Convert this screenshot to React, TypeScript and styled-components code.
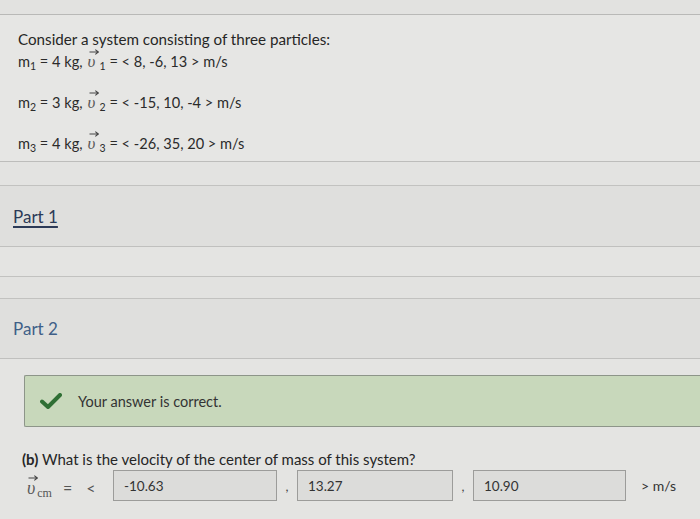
import React from 'react';
import styled, { createGlobalStyle } from 'styled-components';

const GlobalStyle = createGlobalStyle`
  html, body {
    margin: 0;
    padding: 0;
    background: #e2e2e0;
  }
  body {
    font-family: Lato, "Open Sans", sans-serif;
    color: #2a2a2a;
  }
`;

const Page = styled.div`
  width: 700px;
  height: 519px;
  overflow: hidden;
  display: flex;
  flex-direction: column;
  padding-top: 14px;
  box-sizing: border-box;
`;

const QuestionCard = styled.div`
  border-top: 1px solid #b9b9b7;
  border-bottom: 1px solid #bdbdbb;
  background: #e6e6e4;
  padding: 15px 18px 0 18px;
  height: 148px;
  box-sizing: border-box;
`;

const Intro = styled.div`
  font-size: 15.2px;
  line-height: 19px;
  color: #262626;
`;

const ParticleLine = styled.div<{ $gap?: number }>`
  font-size: 14.6px;
  line-height: 20px;
  margin-top: ${(p) => p.$gap ?? 0}px;
  color: #2b2b2b;
  white-space: nowrap;
`;

const Sub = styled.sub`
  font-size: 10.5px;
  vertical-align: -3px;
  line-height: 0;
`;

const VecWrap = styled.span<{ $size: number }>`
  display: inline-block;
  line-height: 1;
  font-family: "Liberation Serif", "DejaVu Serif", serif;
  font-style: italic;
  font-size: ${(p) => p.$size}px;
  color: #5a5a5a;
  margin: 0 1px 0 5px;
  white-space: nowrap;
`;

const Arrow = styled.svg`
  display: block;
  margin-left: 1px;
  margin-bottom: -2px;
`;

const Strip = styled.div<{ $h: number; $bg: string }>`
  height: ${(p) => p.$h}px;
  background: ${(p) => p.$bg};
  border-bottom: 1px solid #c2c2c0;
  box-sizing: border-box;
`;

const PartBand = styled.div<{ $h: number }>`
  height: ${(p) => p.$h}px;
  background: #dfdfdd;
  border-bottom: 1px solid #c0c0be;
  box-sizing: border-box;
  display: flex;
  align-items: center;
  padding-left: 13px;
`;

const PartLink = styled.span<{ $underline?: boolean; $color: string }>`
  font-size: 17px;
  color: ${(p) => p.$color};
  text-decoration: ${(p) => (p.$underline ? 'underline' : 'none')};
  text-underline-offset: 3px;
  text-decoration-thickness: 1.5px;
`;

const AnswerArea = styled.div`
  flex: 1;
  background: #e4e4e2;
  padding: 16px 0 0 24px;
  display: flex;
  flex-direction: column;
`;

const CorrectBox = styled.div`
  height: 52px;
  background: #c8d8bb;
  border: 1px solid #8d9589;
  border-right: none;
  border-radius: 2px 0 0 2px;
  display: flex;
  align-items: center;
  padding-left: 15px;
  gap: 16px;
  box-sizing: border-box;
`;

const CorrectText = styled.span`
  font-size: 14.5px;
  color: #333;
`;

const QuestionText = styled.div`
  margin-top: 23px;
  margin-left: -2px;
  font-size: 15px;
  color: #262626;
  b {
    font-weight: 700;
  }
`;

const AnswerRow = styled.div`
  display: flex;
  align-items: center;
  margin-top: 2px;
  margin-left: -2px;
`;

const Label = styled.div`
  display: flex;
  align-items: baseline;
  width: 91px;
  font-size: 15px;
  color: #555;
`;

const CmSub = styled.span`
  font-family: "Liberation Serif", serif;
  font-size: 12px;
  font-style: normal;
  margin-left: 2px;
  position: relative;
  top: 3px;
  color: #555;
`;

const Op = styled.span<{ $ml: number }>`
  margin-left: ${(p) => p.$ml}px;
  font-size: 16px;
  color: #555;
`;

const Field = styled.div<{ $w: number }>`
  width: ${(p) => p.$w}px;
  height: 31px;
  box-sizing: border-box;
  background: #dcdcda;
  border: 1px solid #9c9c9a;
  display: flex;
  align-items: center;
  padding-left: 10px;
  font-size: 13.5px;
  color: #333;
`;

const Comma = styled.span`
  width: 20px;
  text-align: center;
  font-size: 13px;
  color: #444;
`;

const Unit = styled.span`
  margin-left: 15px;
  font-size: 14px;
  color: #333;
`;

const Vec: React.FC<{ sub?: string; size?: number }> = ({ sub, size = 17 }) => (
  <VecWrap $size={size}>
    <Arrow width="10" height="6" viewBox="0 0 10 6">
      <path d="M0.5 3 H9 M6.3 0.6 L9.4 3 L6.3 5.4" stroke="#444" strokeWidth="1.1" fill="none" />
    </Arrow>
    υ
    {sub && <CmSub>{sub}</CmSub>}
  </VecWrap>
);

const Check = () => (
  <svg width="22" height="16" viewBox="0 0 22 16">
    <path d="M2 8.5 L8 14 L20 2" stroke="#2f6f34" strokeWidth="4" fill="none" strokeLinecap="round" strokeLinejoin="round" />
  </svg>
);

const particles = [
  { n: '1', m: 4, v: '< 8, -6, 13 >', gap: 0 },
  { n: '2', m: 3, v: '< -15, 10, -4 >', gap: 18 },
  { n: '3', m: 4, v: '< -26, 35, 20 >', gap: 18 },
];

const App: React.FC = () => {
  return (
    <>
      <GlobalStyle />
      <Page>
        <QuestionCard>
          <Intro>Consider a system consisting of three particles:</Intro>
          {particles.map((p) => (
            <ParticleLine key={p.n} $gap={p.gap}>
              m<Sub>{p.n}</Sub> = {p.m} kg,
              <Vec />
              <Sub>{p.n}</Sub> = {p.v} m/s
            </ParticleLine>
          ))}
        </QuestionCard>
        <Strip $h={24} $bg="#e3e3e1" />
        <PartBand $h={61}>
          <PartLink $underline $color="#2c3a57">Part 1</PartLink>
        </PartBand>
        <Strip $h={30} $bg="#e4e4e2" />
        <Strip $h={22} $bg="#e2e2e0" />
        <PartBand $h={60}>
          <PartLink $color="#3f5f88">Part 2</PartLink>
        </PartBand>
        <AnswerArea>
          <CorrectBox>
            <Check />
            <CorrectText>Your answer is correct.</CorrectText>
          </CorrectBox>
          <QuestionText>
            <b>(b)</b> What is the velocity of the center of mass of this system?
          </QuestionText>
          <AnswerRow>
            <Label>
              <Vec sub="cm" size={18} />
              <Op $ml={10}>=</Op>
              <Op $ml={14}>&lt;</Op>
            </Label>
            <Field $w={164}>-10.63</Field>
            <Comma>,</Comma>
            <Field $w={156}>13.27</Field>
            <Comma>,</Comma>
            <Field $w={153}>10.90</Field>
            <Unit>&gt; m/s</Unit>
          </AnswerRow>
        </AnswerArea>
      </Page>
    </>
  );
};

export default App;
